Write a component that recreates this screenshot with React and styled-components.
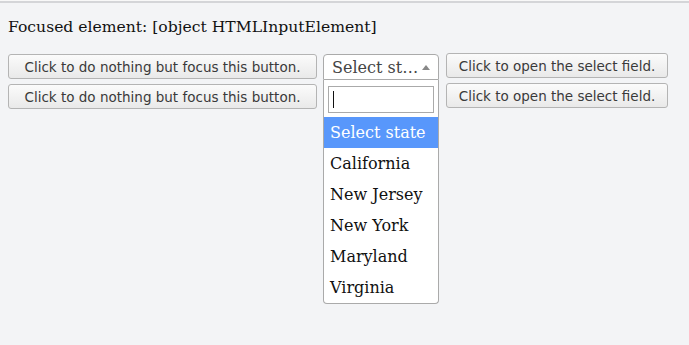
import React, { useState } from 'react'
import styled, { createGlobalStyle } from 'styled-components'

const GlobalStyle = createGlobalStyle`
  html, body {
    margin: 0;
    padding: 0;
    background: #f3f4f6;
    min-height: 100%;
  }
  #root {
    min-height: 100vh;
  }
  body {
    font-family: "DejaVu Serif", serif;
    font-size: 16px;
    color: #111;
  }
`

const TopEdge = styled.div`
  height: 1px;
  background: #f8f8f8;
  border-bottom: 2px solid #d4d5d8;
`

const Page = styled.div`
  min-height: 340px;
  padding: 14px 8px 0 8px;
`

const Status = styled.p`
  margin: 0 0 17px 0;
  line-height: 20px;
  font-size: 15.6px;
`

const Row = styled.div`
  display: flex;
  align-items: flex-start;
  gap: 6px;
`

const Column = styled.div`
  display: flex;
  flex-direction: column;
  gap: 5px;
  margin-top: ${p => p.$top || 0}px;
  margin-left: ${p => p.$offset || 0}px;
`

const PlainButton = styled.button`
  box-sizing: border-box;
  height: 25px;
  width: ${p => p.$w}px;
  padding: 0 6px;
  border: 1px solid #b4b4b4;
  border-radius: 3px;
  background: linear-gradient(#fbfbfb, #e9e9e9);
  font-family: "DejaVu Sans", sans-serif;
  font-size: 13.5px;
  color: #3a3a3a;
  cursor: default;
`

const SelectWrap = styled.div`
  position: relative;
  width: 116px;
`

const SelectBox = styled.div`
  box-sizing: border-box;
  height: 26px;
  display: flex;
  align-items: center;
  padding: 0 8px;
  background: #fff;
  border: 1px solid #aaa;
  border-radius: 4px 4px 0 0;
  color: #444;
  font-size: 16px;
`

const SelectText = styled.span`
  flex: 1;
  white-space: nowrap;
`

const Arrow = styled.span`
  width: 0;
  height: 0;
  border-left: 4px solid transparent;
  border-right: 4px solid transparent;
  border-bottom: 5px solid #888;
`

const Dropdown = styled.div`
  position: absolute;
  top: 26px;
  left: 0;
  right: 0;
  z-index: 10;
  box-sizing: border-box;
  background: #fff;
  border: 1px solid #aaa;
  border-top: none;
  border-radius: 0 0 4px 4px;
  padding: 6px 0 0 0;
`

const SearchField = styled.div`
  position: relative;
  margin: 0 4px 4px 4px;
  &::after {
    content: "";
    position: absolute;
    left: 5px;
    top: 5px;
    width: 1px;
    height: 17px;
    background: #111;
  }
`

const SearchInput = styled.input`
  box-sizing: border-box;
  width: 100%;
  height: 27px;
  border: 1px solid #aaa;
  padding: 0 4px;
  font-family: "DejaVu Serif", serif;
  font-size: 16px;
  outline: none;
`

const Option = styled.div`
  height: 31px;
  line-height: 31px;
  padding: 0 6px;
  font-size: 16px;
  color: ${p => (p.$active ? '#fff' : '#111')};
  background: ${p => (p.$active ? '#5897fb' : 'transparent')};
  white-space: nowrap;
`

const states = ['Select state', 'California', 'New Jersey', 'New York', 'Maryland', 'Virginia']

export default function App() {
  const [query, setQuery] = useState('')
  return (
    <>
      <GlobalStyle />
      <TopEdge />
      <Page>
        <Status>Focused element: [object HTMLInputElement]</Status>
        <Row>
          <Column>
            <PlainButton $w={309}>Click to do nothing but focus this button.</PlainButton>
            <PlainButton $w={309}>Click to do nothing but focus this button.</PlainButton>
          </Column>
          <SelectWrap>
            <SelectBox>
              <SelectText>Select st…</SelectText>
              <Arrow />
            </SelectBox>
            <Dropdown>
              <SearchField>
                <SearchInput value={query} onChange={e => setQuery(e.target.value)} />
              </SearchField>
              {states.map((s, i) => (
                <Option key={s} $active={i === 0}>{s}</Option>
              ))}
            </Dropdown>
          </SelectWrap>
          <Column $offset={1} $top={-1}>
            <PlainButton $w={222}>Click to open the select field.</PlainButton>
            <PlainButton $w={222}>Click to open the select field.</PlainButton>
          </Column>
        </Row>
      </Page>
    </>
  )
}
